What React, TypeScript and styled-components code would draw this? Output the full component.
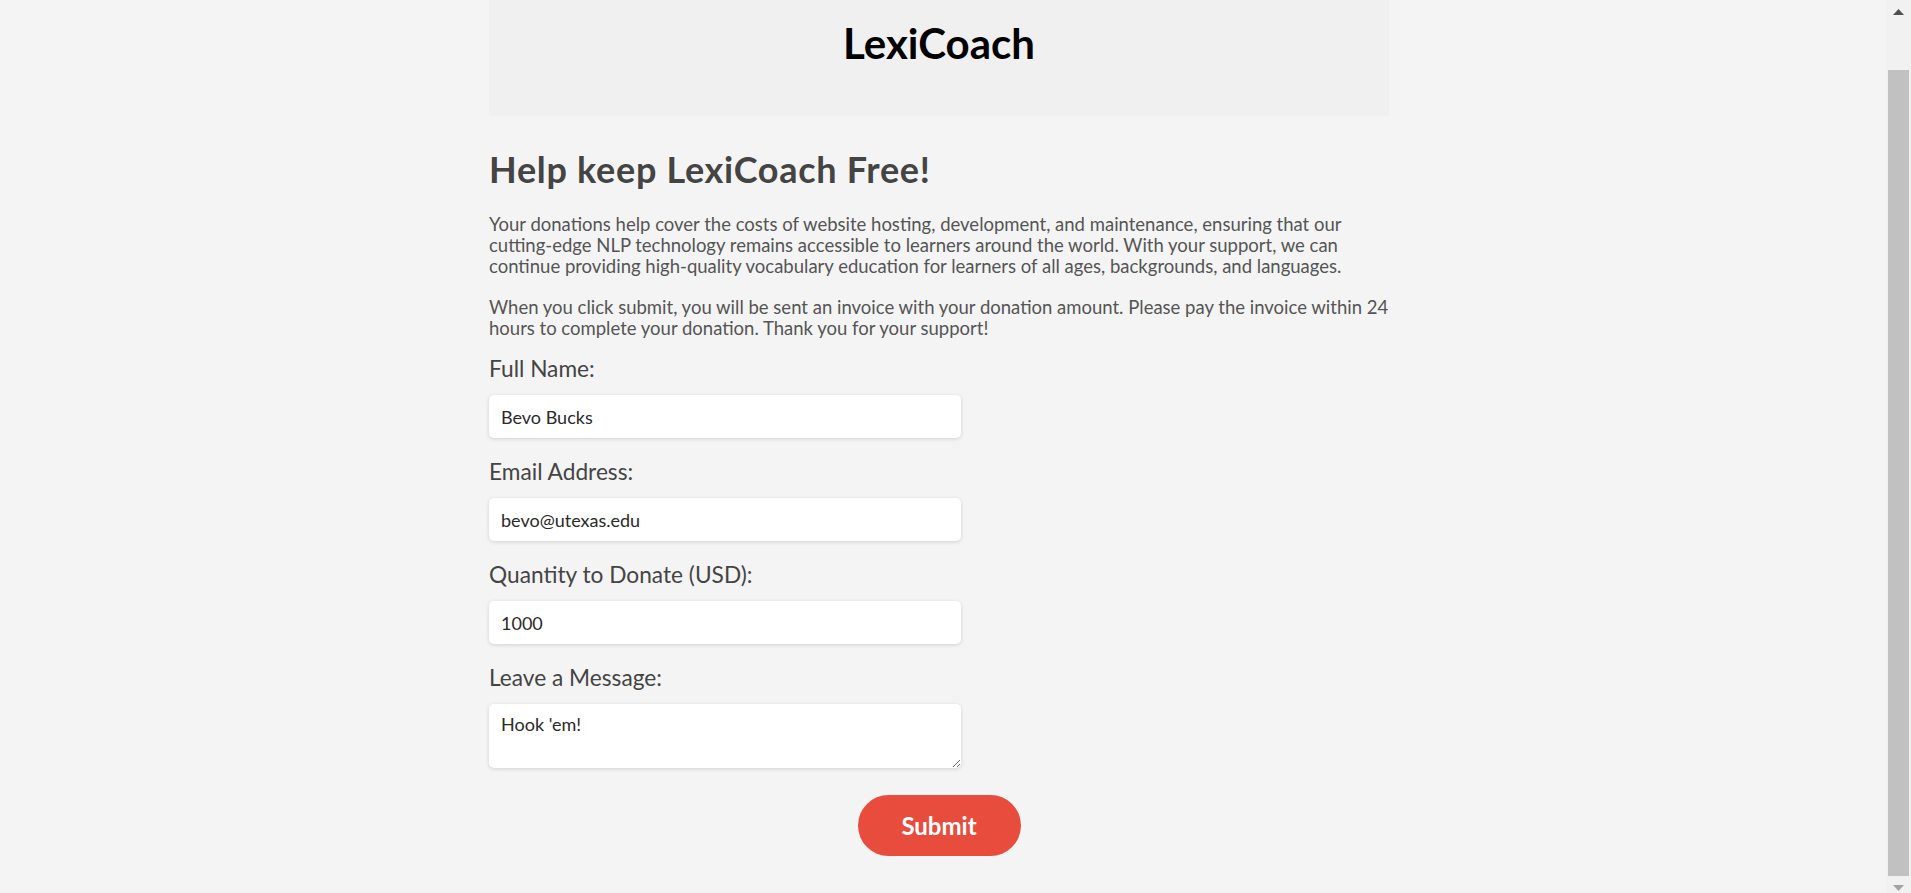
import React from "react";
import styled, { createGlobalStyle } from "styled-components";

const GlobalStyle = createGlobalStyle`
  html, body {
    margin: 0;
    padding: 0;
    height: 100%;
    overflow: hidden;
    background: #f4f4f4;
  }
  body {
    font-family: Lato, "Noto Sans", sans-serif;
  }
  * { box-sizing: border-box; }
`;

const Shell = styled.div`
  display: flex;
  height: 100vh;
`;

const Viewport = styled.div`
  flex: 1;
  min-width: 0;
  overflow: hidden;
  padding-right: 8px;
`;

const Container = styled.div`
  width: 900px;
  margin: 0 auto;
`;

const Header = styled.header`
  height: 116px;
  padding-top: 19px;
  background: #f0f0f0;
  text-align: center;
`;

const Title = styled.h1`
  margin: 0;
  font-size: 42px;
  line-height: 48px;
  font-weight: 700;
  color: #000;
`;

const Main = styled.main`
  display: flex;
  flex-direction: column;
`;

const Heading = styled.h2`
  margin: 32px 0 0;
  font-size: 36px;
  line-height: 42px;
  letter-spacing: 0.7px;
  font-weight: 700;
  color: #444;
`;

const Para = styled.p<{ $gap: number }>`
  margin: ${(p) => p.$gap}px 0 0;
  font-size: 18.5px;
  line-height: 21px;
  color: #555;
`;

const Form = styled.form`
  display: flex;
  flex-direction: column;
  gap: 21px;
  margin-top: 17px;
`;

const Field = styled.div`
  display: flex;
  flex-direction: column;
  gap: 13px;
`;

const Label = styled.label`
  font-size: 22.7px;
  line-height: 26px;
  color: #444;
`;

const fieldBase = `
  width: 472px;
  border: none;
  border-radius: 5px;
  background: #fff;
  font-family: Lato, "Noto Sans", sans-serif;
  font-size: 18px;
  color: #2a2a2a;
  box-shadow: 0 1px 4px rgba(0, 0, 0, 0.14);
  outline: none;
`;

const Input = styled.input`
  ${fieldBase}
  height: 43px;
  padding: 0 12px;
`;

const TextArea = styled.textarea`
  ${fieldBase}
  height: 64px;
  padding: 9px 12px;
  resize: vertical;
`;

const ButtonRow = styled.div`
  display: flex;
  justify-content: center;
  margin-top: 6px;
`;

const SubmitButton = styled.button`
  width: 163px;
  height: 61px;
  border: none;
  border-radius: 31px;
  background: #e74c3c;
  color: #fff;
  font-family: Lato, "Noto Sans", sans-serif;
  font-size: 24px;
  font-weight: 700;
  cursor: pointer;
`;

const Scrollbar = styled.div`
  width: 25px;
  flex: none;
  display: flex;
  flex-direction: column;
  background: #f1f1f1;
`;

const ArrowButton = styled.div<{ $h: number; $end?: boolean }>`
  height: ${(p) => p.$h}px;
  flex: none;
  display: flex;
  justify-content: center;
  align-items: ${(p) => (p.$end ? "flex-end" : "center")};
  padding-bottom: ${(p) => (p.$end ? 2 : 0)}px;
`;

const Track = styled.div`
  flex: 1;
  display: flex;
  flex-direction: column;
  padding: 46px 2px 0;
`;

const Thumb = styled.div`
  flex: 1;
  background: #c1c1c1;
`;

const Arrow = ({ up, color }: { up?: boolean; color: string }) => (
  <svg width="11" height="6" viewBox="0 0 11 6">
    {up ? (
      <polygon points="5.5,0 11,6 0,6" fill={color} />
    ) : (
      <polygon points="0,0 11,0 5.5,6" fill={color} />
    )}
  </svg>
);

export default function App() {
  return (
    <>
      <GlobalStyle />
      <Shell>
        <Viewport>
          <Container>
            <Header>
              <Title>LexiCoach</Title>
            </Header>
            <Main>
              <Heading>Help keep LexiCoach Free!</Heading>
              <Para $gap={24}>
                Your donations help cover the costs of website hosting, development, and
                maintenance, ensuring that our cutting-edge NLP technology remains accessible to
                learners around the world. With your support, we can continue providing
                high-quality vocabulary education for learners of all ages, backgrounds, and
                languages.
              </Para>
              <Para $gap={20}>
                When you click submit, you will be sent an invoice with your donation amount.
                Please pay the invoice within 24 hours to complete your donation. Thank you for
                your support!
              </Para>
              <Form onSubmit={(e) => e.preventDefault()}>
                <Field>
                  <Label htmlFor="name">Full Name:</Label>
                  <Input id="name" type="text" defaultValue="Bevo Bucks" />
                </Field>
                <Field>
                  <Label htmlFor="email">Email Address:</Label>
                  <Input id="email" type="email" defaultValue="bevo@utexas.edu" />
                </Field>
                <Field>
                  <Label htmlFor="qty">Quantity to Donate (USD):</Label>
                  <Input id="qty" type="text" defaultValue="1000" />
                </Field>
                <Field>
                  <Label htmlFor="msg">Leave a Message:</Label>
                  <TextArea id="msg" defaultValue="Hook 'em!" />
                </Field>
                <ButtonRow>
                  <SubmitButton type="submit">Submit</SubmitButton>
                </ButtonRow>
              </Form>
            </Main>
          </Container>
        </Viewport>
        <Scrollbar>
          <ArrowButton $h={24}>
            <Arrow up color="#505050" />
          </ArrowButton>
          <Track>
            <Thumb />
          </Track>
          <ArrowButton $h={17} $end>
            <Arrow color="#a3a3a3" />
          </ArrowButton>
        </Scrollbar>
      </Shell>
    </>
  );
}
